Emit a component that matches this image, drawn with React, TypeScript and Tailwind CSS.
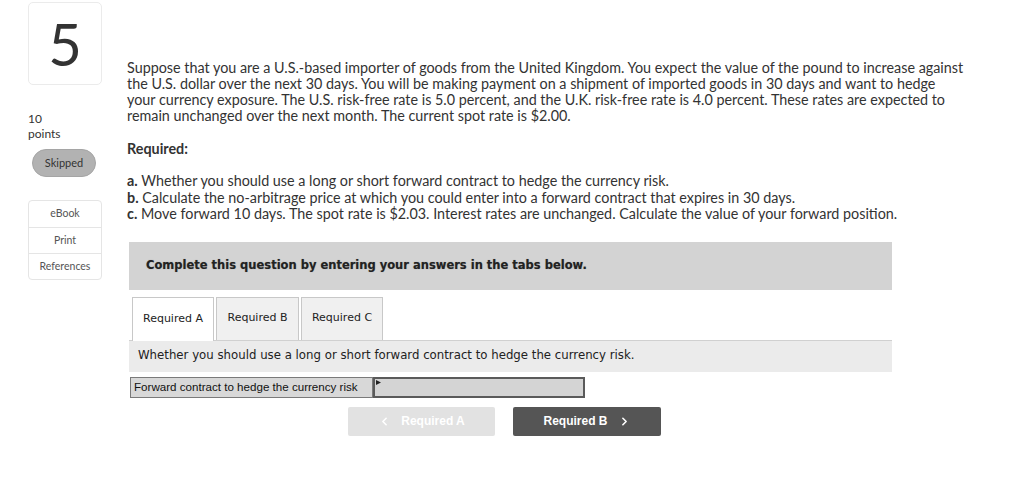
import { ChevronLeft, ChevronRight } from "lucide-react";

const body = { fontFamily: "Lato, 'Open Sans', sans-serif" };
const verdana = { fontFamily: "'DejaVu Sans', Verdana, sans-serif" };
const arial = { fontFamily: "'Liberation Sans', Arial, sans-serif" };

function Sidebar() {
  return (
    <div className="w-[74px] shrink-0 flex flex-col" style={body}>
      <div className="mt-[2px] h-[83px] rounded-[5px] border border-[#ebebeb] flex items-center justify-center">
        <span className="text-[58px] leading-none text-[#333]">5</span>
      </div>
      <div className="mt-[26px] text-[12px] leading-[15px] text-[#333]">
        <div>10</div>
        <div>points</div>
      </div>
      <div className="mt-[8px] ml-[4px] w-[64px] h-[28px] rounded-full bg-[#b2b2b2] border border-[#a5a5a5] flex items-center justify-center text-[11px] text-[#333]">
        Skipped
      </div>
      <div className="mt-[23px] rounded-[4px] border border-[#e5e5e5] text-[10.5px] text-[#555]">
        {["eBook", "Print", "References"].map((t, i) => (
          <div
            key={t}
            className={`h-[26px] flex items-center justify-center ${i > 0 ? "border-t border-[#e5e5e5]" : ""}`}
          >
            {t}
          </div>
        ))}
      </div>
    </div>
  );
}

export default function App() {
  return (
    <div className="w-[1024px] h-[480px] bg-white flex pl-[28px] overflow-hidden">
      <Sidebar />
      <div className="ml-[25px] w-[860px]">
        <div className="mt-[60px] text-[14.35px] leading-[16px] text-[#333] whitespace-nowrap" style={body}>
          <p>
            Suppose that you are a U.S.-based importer of goods from the United Kingdom. You expect the value of the pound to increase against
            <br />
            the U.S. dollar over the next 30 days. You will be making payment on a shipment of imported goods in 30 days and want to hedge
            <br />
            your currency exposure. The U.S. risk-free rate is 5.0 percent, and the U.K. risk-free rate is 4.0 percent. These rates are expected to
            <br />
            remain unchanged over the next month. The current spot rate is $2.00.
          </p>
          <p className="mt-[17px] font-bold">Required:</p>
          <div className="mt-[16px] leading-[16.5px]">
            <p>
              <b>a.</b> Whether you should use a long or short forward contract to hedge the currency risk.
            </p>
            <p>
              <b>b.</b> Calculate the no-arbitrage price at which you could enter into a forward contract that expires in 30 days.
            </p>
            <p>
              <b>c.</b> Move forward 10 days. The spot rate is $2.03. Interest rates are unchanged. Calculate the value of your forward position.
            </p>
          </div>
        </div>

        <div className="mt-[19px] ml-[2px] w-[763px]">
          <div className="h-[48px] bg-[#d3d3d3] flex items-center pl-[17px]">
            <span
              className="text-[11.5px] font-bold text-[#222] [text-shadow:0_0_1px_rgba(0,0,0,0.35)]"
              style={verdana}
            >
              Complete this question by entering your answers in the tabs below.
            </span>
          </div>

          <div className="mt-[7px] flex gap-[2px] pl-[3px] text-[11px] text-[#222]" style={verdana}>
            <div className="w-[82px] h-[44px] -mb-px bg-white border border-b-0 border-[#c8c8c8] flex items-center justify-center relative z-10">
              Required A
            </div>
            <div className="w-[83px] h-[43px] bg-[#f0f0f0] border border-b-0 border-[#c8c8c8] flex items-center justify-center">
              Required B
            </div>
            <div className="w-[82px] h-[43px] bg-[#f0f0f0] border border-b-0 border-[#c8c8c8] flex items-center justify-center">
              Required C
            </div>
          </div>
          <div className="h-[32px] bg-[#ebebeb] border-t border-[#d0d0d0] flex items-center pl-[9px] text-[11.75px] text-[#222]" style={verdana}>
            Whether you should use a long or short forward contract to hedge the currency risk.
          </div>

          <div className="mt-[5px] ml-[1px] flex h-[21px] text-[11.6px] text-[#111]" style={arial}>
            <div className="w-[243px] bg-[#d8d8d8] border border-[#7a7a7a] flex items-center pl-[3px]">
              Forward contract to hedge the currency risk
            </div>
            <div className="w-[212px] bg-[#d4d4d4] border-2 border-[#5a5a5a] relative">
              <svg className="absolute left-[1px] top-[1px]" width="5" height="6" viewBox="0 0 5 6">
                <path d="M0 0 L5 2.5 L0 5 Z" fill="#222" />
              </svg>
            </div>
          </div>

          <div className="mt-[9px] flex justify-center gap-[18px] pr-[12px]" style={arial}>
            <div className="w-[147px] h-[29px] bg-[#e2e2e2] rounded-[2px] flex items-center justify-center gap-[10px] text-[12px] font-bold text-white">
              <ChevronLeft size={13} strokeWidth={3} />
              Required A
            </div>
            <div className="w-[148px] h-[29px] bg-[#555555] rounded-[2px] flex items-center justify-center gap-[10px] text-[12px] font-bold text-white">
              Required B
              <ChevronRight size={13} strokeWidth={3} />
            </div>
          </div>
        </div>
      </div>
    </div>
  );
}
